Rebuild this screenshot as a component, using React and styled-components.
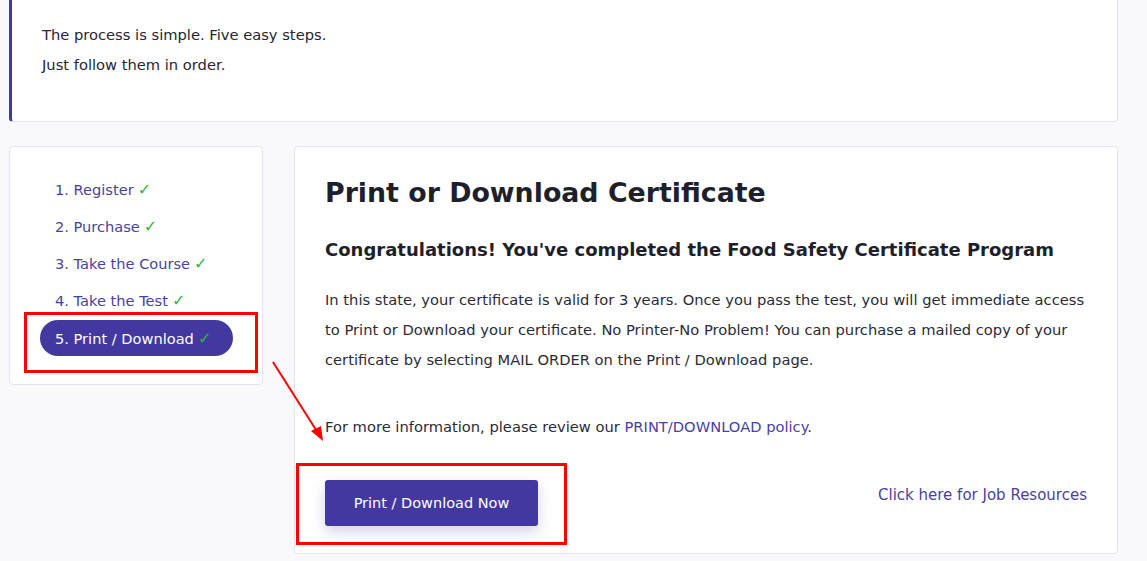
import React from "react";
import styled, { createGlobalStyle } from "styled-components";

const GlobalStyle = createGlobalStyle`
  body {
    margin: 0;
    background: #f9f9fb;
    font-family: "DejaVu Sans", "Noto Sans", sans-serif;
    color: #262630;
  }
`;

const Page = styled.div`
  position: relative;
  width: 1147px;
  height: 561px;
  padding: 0 29px 0 9px;
  box-sizing: border-box;
  overflow: hidden;
`;

const Intro = styled.div`
  background: white;
  border: 1px solid #e4e4ee;
  border-top: none;
  border-left: 3px solid #4338a0;
  border-radius: 0 0 4px 4px;
  padding: 20px 30px 41px;
  font-size: 14.7px;
  line-height: 30px;
  color: #262630;
`;

const Row = styled.div`
  display: flex;
  align-items: flex-start;
  gap: 31px;
  margin-top: 24px;
`;

const Card = styled.div`
  background: white;
  border: 1px solid #e4e4ee;
  border-radius: 4px;
  box-sizing: border-box;
`;

const Sidebar = styled(Card)`
  width: 254px;
  padding: 24px 30px 28px;
`;

const Steps = styled.ul`
  list-style: none;
  margin: 0;
  padding: 0;
`;

const Step = styled.li`
  display: inline-flex;
  align-items: center;
  height: ${(p) => (p.$active ? "36px" : "37px")};
  margin-top: ${(p) => (p.$active ? "1px" : "0")};
  padding: 0 22px 0 15px;
  border-radius: 18px;
  font-size: 14.6px;
  color: ${(p) => (p.$active ? "white" : "#4a3fa0")};
  background: ${(p) => (p.$active ? "#4338a0" : "transparent")};
  white-space: nowrap;
`;

const Check = styled.span`
  color: #2fb344;
  margin-left: 4px;
  font-size: 16px;
`;

const Main = styled(Card)`
  flex: 1;
  padding: 28px 30px 27px;
`;

const Title = styled.h1`
  margin: 0;
  font-size: 26.8px;
  line-height: 36px;
  font-weight: 600;
  color: #1e1f2b;
`;

const Subtitle = styled.h2`
  margin: 26px 0 0;
  font-size: 18px;
  line-height: 26px;
  font-weight: 600;
  color: #1e1f2b;
`;

const Text = styled.p`
  margin: ${(p) => p.$top || "22px"} 0 0;
  font-size: 14.7px;
  line-height: 30px;
  color: #2b2b36;
`;

const Link = styled.a`
  color: #4a3fa0;
  text-decoration: none;
`;

const Actions = styled.div`
  display: flex;
  align-items: center;
  justify-content: space-between;
  margin-top: 38px;
`;

const Button = styled.button`
  width: 213px;
  height: 46px;
  border: none;
  border-radius: 3px;
  background: #4338a0;
  color: white;
  font-family: inherit;
  font-size: 14.5px;
  font-weight: 500;
  box-shadow: 0 6px 14px rgba(67, 56, 160, 0.22);
  cursor: pointer;
`;

const SideLink = styled(Link)`
  font-size: 15px;
  margin-bottom: 17px;
`;

const Highlight = styled.div`
  position: absolute;
  left: ${(p) => p.$x}px;
  top: ${(p) => p.$y}px;
  width: ${(p) => p.$w}px;
  height: ${(p) => p.$h}px;
  border: 3px solid #ff0000;
  box-sizing: border-box;
  pointer-events: none;
`;

const Arrow = styled.svg`
  position: absolute;
  left: 266px;
  top: 355px;
  pointer-events: none;
`;

const steps = ["1. Register", "2. Purchase", "3. Take the Course", "4. Take the Test"];

export default function App() {
  return (
    <Page>
      <GlobalStyle />
      <Intro>
        The process is simple. Five easy steps.
        <br />
        Just follow them in order.
      </Intro>
      <Row>
        <Sidebar>
          <Steps>
            {steps.map((s) => (
              <Step key={s}>
                {s}
                <Check>✓</Check>
              </Step>
            ))}
            <Step $active>
              5. Print / Download
              <Check>✓</Check>
            </Step>
          </Steps>
        </Sidebar>
        <Main>
          <Title>Print or Download Certificate</Title>
          <Subtitle>Congratulations! You've completed the Food Safety Certificate Program</Subtitle>
          <Text>
            In this state, your certificate is valid for 3 years. Once you pass the test, you will get immediate access
            <br />
            to Print or Download your certificate. No Printer-No Problem! You can purchase a mailed copy of your
            <br />
            certificate by selecting MAIL ORDER on the Print / Download page.
          </Text>
          <Text $top="37px">
            For more information, please review our <Link href="#">PRINT/DOWNLOAD policy</Link>.
          </Text>
          <Actions>
            <Button>Print / Download Now</Button>
            <SideLink href="#">Click here for Job Resources</SideLink>
          </Actions>
        </Main>
      </Row>
      <Highlight $x={24} $y={312} $w={234} $h={61} />
      <Highlight $x={296} $y={463} $w={271} $h={82} />
      <Arrow width="70" height="95" viewBox="0 0 70 95">
        <line x1="7" y1="7" x2="52" y2="78" stroke="#ff0000" strokeWidth="2" />
        <polygon points="57,86 45,76 55,71" fill="#ff0000" />
      </Arrow>
    </Page>
  );
}
